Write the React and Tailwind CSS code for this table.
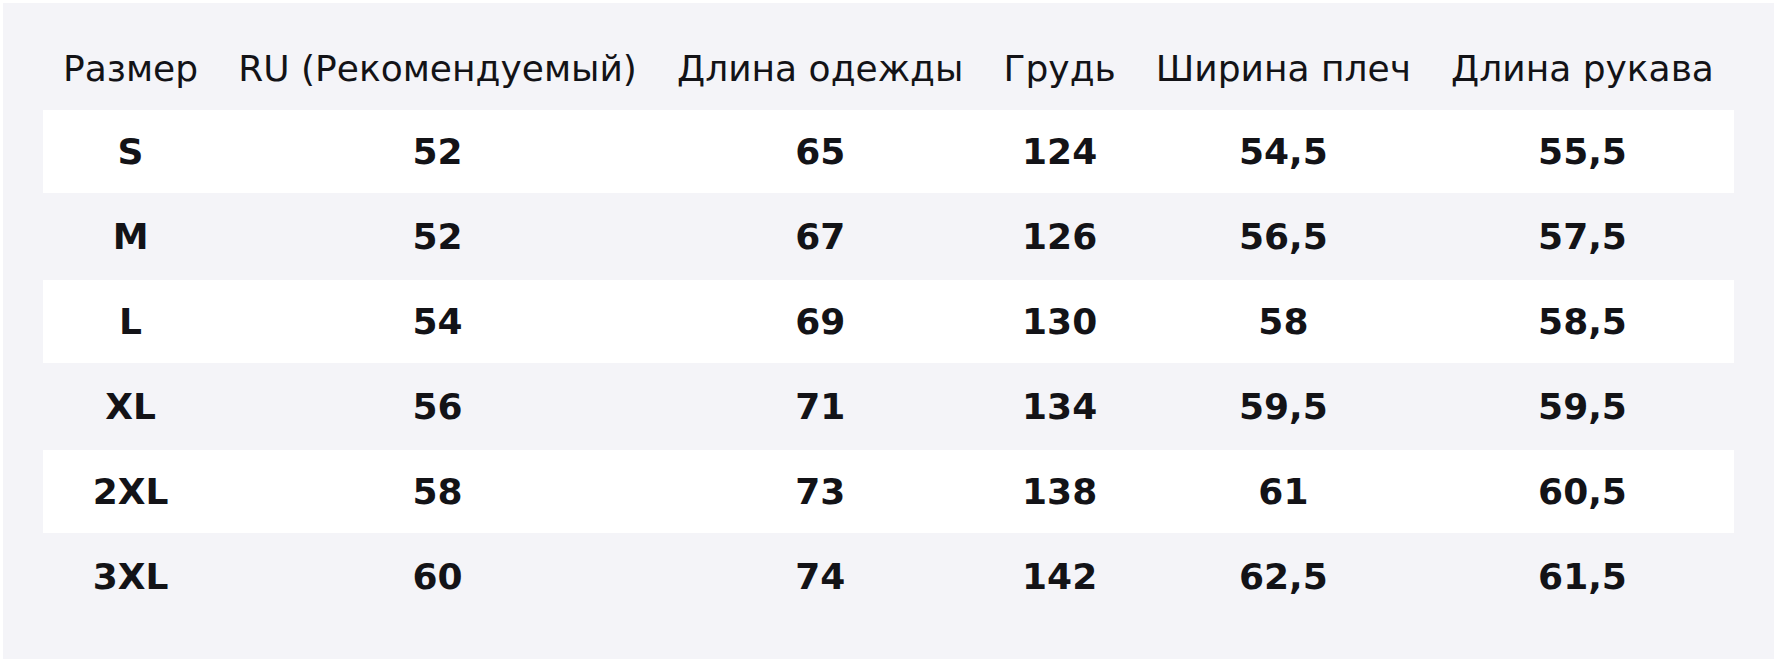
import React from 'react';

const headers = ['Размер', 'RU (Рекомендуемый)', 'Длина одежды', 'Грудь', 'Ширина плеч', 'Длина рукава'];

const rows = [
    ['S', '52', '65', '124', '54,5', '55,5'],
    ['M', '52', '67', '126', '56,5', '57,5'],
    ['L', '54', '69', '130', '58', '58,5'],
    ['XL', '56', '71', '134', '59,5', '59,5'],
    ['2XL', '58', '73', '138', '61', '60,5'],
    ['3XL', '60', '74', '142', '62,5', '61,5'],
];

export default function App() {
    return (
        <div className="bg-white p-[3px] w-[1777px] h-[663px]" style={{ fontFamily: '"DejaVu Sans", sans-serif' }}>
            <div className="bg-[#f4f4f8] px-[40px] pt-[44px] pb-[39px] text-[#131317]">
                <table className="w-full border-collapse">
                    <thead>
                        <tr>
                            {headers.map((h) => (
                                <th key={h} className="px-[20px] pb-[20px] text-[36px] leading-[43px] font-normal text-center whitespace-nowrap align-top">
                                    {h}
                                </th>
                            ))}
                        </tr>
                    </thead>
                    <tbody>
                        {rows.map((row, i) => (
                            <tr key={row[0]} className={i % 2 === 0 ? 'bg-white h-[83px]' : 'h-[87px]'}>
                                {row.map((cell, j) => (
                                    <td key={j} className="px-[20px] text-[36px] leading-[43px] font-bold text-center align-middle">
                                        {cell}
                                    </td>
                                ))}
                            </tr>
                        ))}
                    </tbody>
                </table>
            </div>
        </div>
    );
}
